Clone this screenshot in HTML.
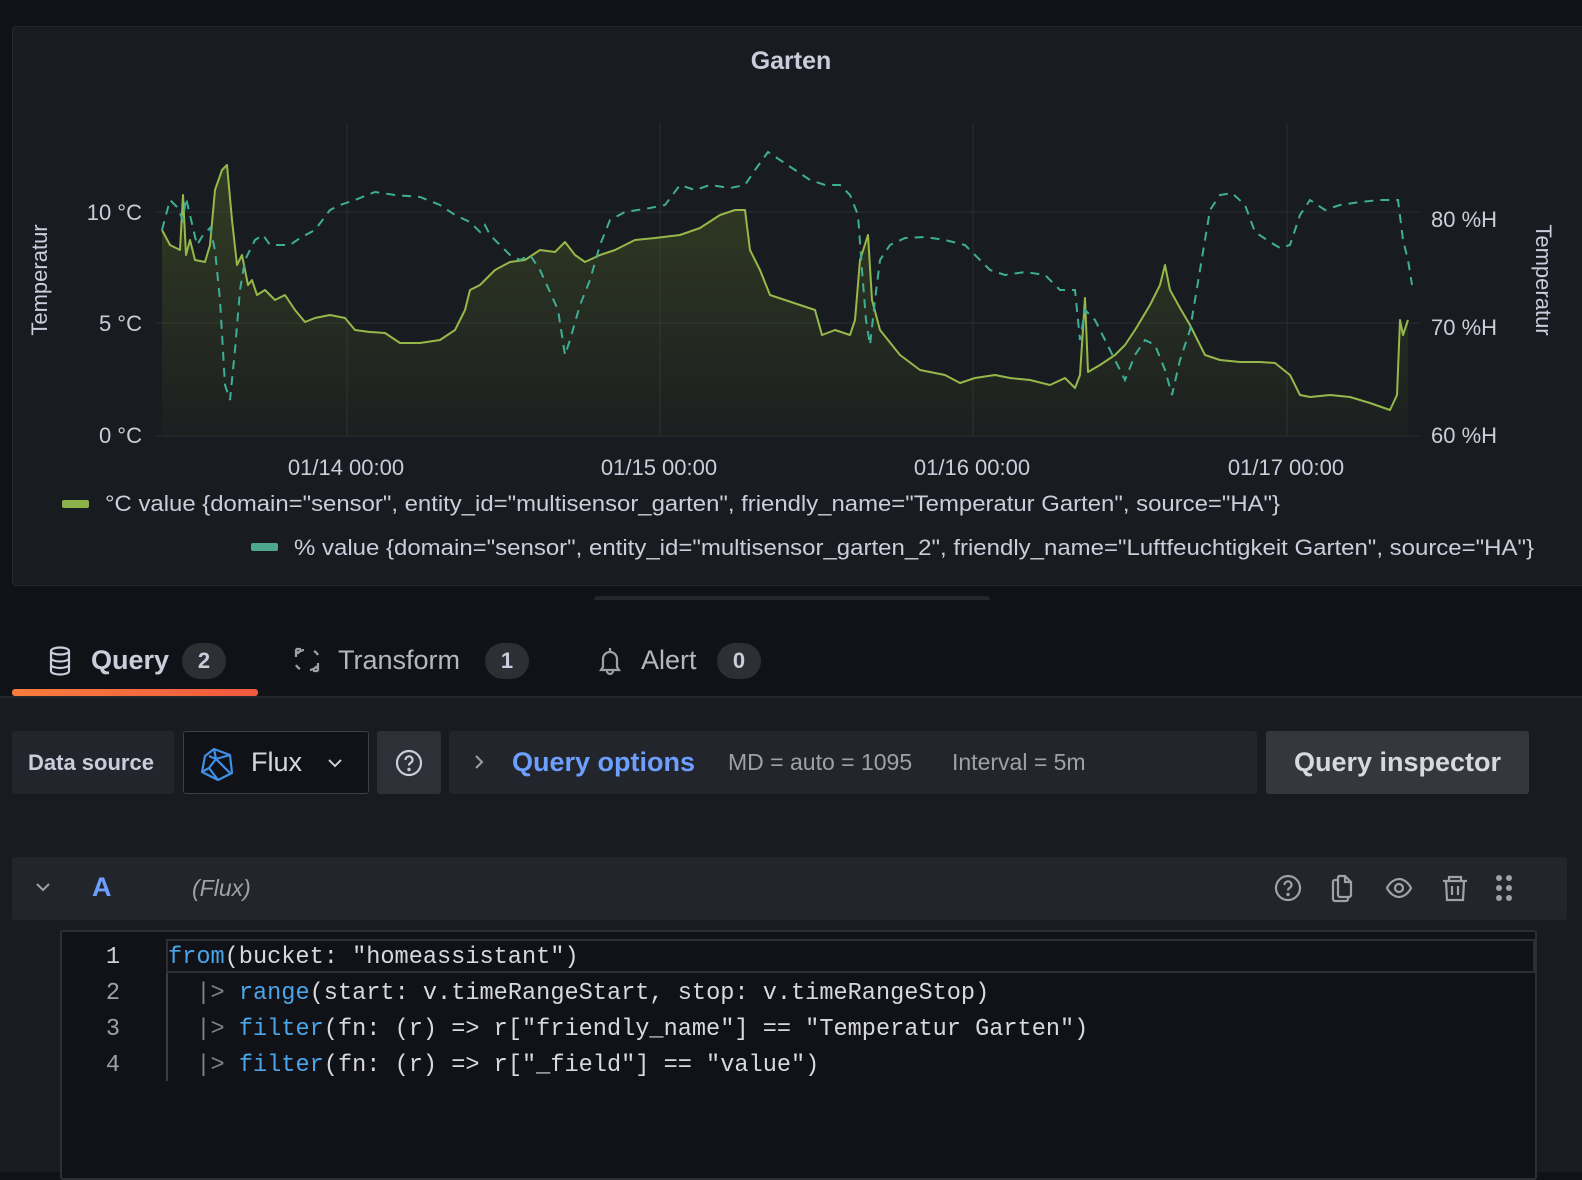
<!DOCTYPE html>
<html><head><meta charset="utf-8"><style>
*{margin:0;padding:0;box-sizing:border-box}
body{width:1582px;height:1172px;background:#111217;font-family:"Liberation Sans",sans-serif;color:#ccccdc;position:relative;overflow:hidden}
.abs{position:absolute}
.panel{left:12px;top:26px;width:1580px;height:560px;background:#181b1f;border:1px solid #24272d;border-radius:4px}
.lower{left:0;top:698px;width:1582px;height:474px;background:#181b1f}
.badge{position:absolute;height:36px;border-radius:18px;background:#2d2f35;color:#ccccdc;font-size:22px;font-weight:bold;text-align:center;line-height:36px;width:44px}
.tab{position:absolute;top:642px;font-size:27px;line-height:36px}
.box{position:absolute;top:731px;height:63px;border-radius:3px}
.mono{font-family:"Liberation Mono",monospace;font-size:23.6px;line-height:36px;white-space:pre}
</style></head><body>
<div class="abs panel"></div>
<svg class="abs" style="left:0;top:0" width="1582" height="600">
<text x="791" y="69" text-anchor="middle" font-size="25" font-weight="bold" fill="#ccccdc" font-family="Liberation Sans">Garten</text>
<g stroke="#2a2d33" stroke-width="1">
<line x1="155" y1="212" x2="1420" y2="212"/><line x1="155" y1="323" x2="1420" y2="323"/><line x1="155" y1="436" x2="1420" y2="436"/>
<line x1="347" y1="123" x2="347" y2="436"/><line x1="660" y1="123" x2="660" y2="436"/><line x1="973" y1="123" x2="973" y2="436"/><line x1="1287" y1="123" x2="1287" y2="436"/>
</g>
<g font-size="22" fill="#ccccdc" font-family="Liberation Sans">
<text x="142" y="220" text-anchor="end">10 °C</text><text x="142" y="331" text-anchor="end">5 °C</text><text x="142" y="443" text-anchor="end">0 °C</text>
<text x="1431" y="227">80 %H</text><text x="1431" y="335">70 %H</text><text x="1431" y="443">60 %H</text>
<text x="346" y="475" text-anchor="middle">01/14 00:00</text><text x="659" y="475" text-anchor="middle">01/15 00:00</text><text x="972" y="475" text-anchor="middle">01/16 00:00</text><text x="1286" y="475" text-anchor="middle">01/17 00:00</text>
<text transform="translate(47,280) rotate(-90)" text-anchor="middle">Temperatur</text>
<text transform="translate(1536,280) rotate(90)" text-anchor="middle">Temperatur</text>
<text x="105" y="511" textLength="1175" lengthAdjust="spacingAndGlyphs">°C value {domain="sensor", entity_id="multisensor_garten", friendly_name="Temperatur Garten", source="HA"}</text>
<text x="294" y="555" textLength="1240" lengthAdjust="spacingAndGlyphs">% value {domain="sensor", entity_id="multisensor_garten_2", friendly_name="Luftfeuchtigkeit Garten", source="HA"}</text>
</g>
<rect x="62" y="500" width="27" height="8" rx="2" fill="#8ab04a"/>
<rect x="251" y="543" width="27" height="8" rx="2" fill="#4ea88e"/>
<defs><linearGradient id="g" x1="0" y1="0" x2="0" y2="1"><stop offset="0" stop-color="#5a6e2a" stop-opacity=".4"/><stop offset="1" stop-color="#5a6e2a" stop-opacity=".05"/></linearGradient></defs>
<polygon fill="url(#g)" points="162,436 162,230 170,245 180,250 183,195 186,255 190,240 195,260 205,262 210,245 215,190 222,170 227,165 232,220 237,265 242,255 248,285 252,280 257,295 265,290 275,300 285,295 295,310 305,322 315,318 330,315 345,318 355,330 370,332 385,333 400,343 420,343 440,340 455,330 465,310 470,290 480,285 495,270 510,262 525,260 540,250 555,252 565,242 575,255 585,262 600,255 615,250 635,240 655,238 680,235 700,228 720,215 735,210 745,210 750,250 760,270 770,295 785,300 800,305 815,310 822,335 835,330 850,335 855,320 860,260 868,235 872,300 880,330 900,355 920,370 945,375 960,383 975,378 995,375 1010,378 1030,380 1050,385 1065,378 1075,388 1080,375 1085,298 1088,372 1100,365 1115,355 1125,345 1135,330 1150,305 1160,285 1165,265 1170,290 1180,308 1190,325 1205,355 1220,360 1240,362 1260,362 1275,363 1290,375 1300,395 1310,397 1330,395 1350,397 1370,403 1390,410 1397,395 1400,320 1403,335 1408,320 1408,436"/>
<polyline fill="none" stroke="#96b84a" stroke-width="2" stroke-linejoin="round" points="162,230 170,245 180,250 183,195 186,255 190,240 195,260 205,262 210,245 215,190 222,170 227,165 232,220 237,265 242,255 248,285 252,280 257,295 265,290 275,300 285,295 295,310 305,322 315,318 330,315 345,318 355,330 370,332 385,333 400,343 420,343 440,340 455,330 465,310 470,290 480,285 495,270 510,262 525,260 540,250 555,252 565,242 575,255 585,262 600,255 615,250 635,240 655,238 680,235 700,228 720,215 735,210 745,210 750,250 760,270 770,295 785,300 800,305 815,310 822,335 835,330 850,335 855,320 860,260 868,235 872,300 880,330 900,355 920,370 945,375 960,383 975,378 995,375 1010,378 1030,380 1050,385 1065,378 1075,388 1080,375 1085,298 1088,372 1100,365 1115,355 1125,345 1135,330 1150,305 1160,285 1165,265 1170,290 1180,308 1190,325 1205,355 1220,360 1240,362 1260,362 1275,363 1290,375 1300,395 1310,397 1330,395 1350,397 1370,403 1390,410 1397,395 1400,320 1403,335 1408,320"/>
<polyline fill="none" stroke="#3fae96" stroke-width="2" stroke-dasharray="9,7" points="162,230 170,200 177,207 183,220 186,198 190,215 193,228 197,245 203,235 210,228 215,250 220,300 225,385 230,400 235,350 240,290 245,260 255,240 263,235 270,245 290,245 300,238 315,230 330,210 340,205 355,200 375,192 395,195 420,197 440,205 455,215 470,222 480,232 485,225 490,235 500,245 510,255 520,260 530,255 540,270 550,292 558,310 565,355 570,340 580,305 590,280 600,245 610,220 625,212 650,208 665,205 680,185 695,190 710,185 730,188 745,185 755,170 768,152 780,160 795,170 810,180 825,185 840,185 850,195 858,215 862,270 866,320 870,345 875,300 880,260 890,245 905,238 925,237 945,240 965,245 980,260 990,270 1005,275 1025,272 1045,275 1060,290 1075,290 1080,340 1085,310 1095,320 1110,350 1125,380 1135,355 1145,340 1155,345 1165,370 1172,395 1180,360 1190,330 1200,270 1210,210 1220,195 1232,193 1245,205 1255,232 1270,242 1280,248 1290,245 1300,215 1310,200 1325,210 1340,205 1360,202 1380,200 1398,200 1403,240 1408,260 1412,285"/>
<rect x="594" y="596" width="396" height="6" rx="3" fill="#24272d"/>
</svg>

<div class="abs lower"></div>
<div class="abs" style="left:0;top:696px;width:1582px;height:2px;background:#24272d"></div>
<div class="abs" style="left:12px;top:689px;width:246px;height:7px;border-radius:3px;background:linear-gradient(90deg,#f87d3c,#f05a3f)"></div>

<svg class="abs" style="left:47px;top:646px" width="26" height="30" viewBox="0 0 26 30" fill="none" stroke="#ccccdc" stroke-width="2.2"><ellipse cx="13" cy="5" rx="9" ry="3.5"/><path d="M4 5v20c0 2 4 3.5 9 3.5s9-1.5 9-3.5V5M4 12c0 2 4 3.5 9 3.5s9-1.5 9-3.5M4 18.5c0 2 4 3.5 9 3.5s9-1.5 9-3.5"/></svg>
<div class="tab" style="left:91px;color:#ccccdc;font-weight:bold">Query</div>
<div class="badge" style="left:182px;top:643px">2</div>
<svg class="abs" style="left:293px;top:646px" width="28" height="28" viewBox="0 0 28 28" fill="none" stroke="#9fa1a8" stroke-width="2.2"><path d="M3 11V5l2 2a10 10 0 0 1 6-3M25 17v6l-2-2a10 10 0 0 1-6 3M8 3H3M20 25h5M25 9a10 10 0 0 0-4-4M3 19a10 10 0 0 0 4 4"/></svg>
<div class="tab" style="left:338px;color:#b5b7c0">Transform</div>
<div class="badge" style="left:485px;top:643px">1</div>
<svg class="abs" style="left:598px;top:646px" width="24" height="30" viewBox="0 0 24 30" fill="none" stroke="#9fa1a8" stroke-width="2.2"><path d="M12 2v3M5 21V13a7 7 0 0 1 14 0v8l2 3H3zM9 25a3 3 0 0 0 6 0"/></svg>
<div class="tab" style="left:641px;color:#b5b7c0">Alert</div>
<div class="badge" style="left:717px;top:643px">0</div>

<div class="box" style="left:12px;width:162px;background:#22252b;font-size:22px;font-weight:bold;line-height:63px;padding-left:16px;color:#ccccdc">Data source</div>
<div class="box" style="left:183px;width:186px;background:#111217;border:1px solid #3b3f46">
<svg class="abs" style="left:16px;top:15px" width="34" height="34" viewBox="0 0 34 34" fill="none" stroke="#3f8fe8" stroke-width="2.2" stroke-linejoin="round"><path d="M14 2L30 8l2 18-14 7-16-8 3-16zM14 2l2 10 14-4M16 12l-7 9 9 12M16 12l14 14M2 25l7-4M9 9l7 3"/></svg>
<div class="abs" style="left:67px;top:0;font-size:27px;line-height:61px;color:#d8d9e0">Flux</div>
<svg class="abs" style="left:143px;top:25px" width="16" height="12" viewBox="0 0 16 12" fill="none" stroke="#ccccdc" stroke-width="2"><path d="M2 3l6 6 6-6"/></svg>
</div>
<div class="box" style="left:377px;width:64px;background:#2d3036"><svg class="abs" style="left:17px;top:17px" width="30" height="30" viewBox="0 0 30 30" fill="none" stroke="#ccccdc" stroke-width="2.2"><circle cx="15" cy="15" r="12"/><path d="M11.5 12a3.5 3.5 0 1 1 5 3c-1.2.7-1.5 1.3-1.5 2.5"/><circle cx="15" cy="21.5" r=".6" fill="#ccccdc"/></svg></div>
<div class="box" style="left:449px;width:808px;background:#22252b">
<svg class="abs" style="left:24px;top:22px" width="12" height="18" viewBox="0 0 12 18" fill="none" stroke="#9fa1a8" stroke-width="2"><path d="M3 3l6 6-6 6"/></svg>
<div class="abs" style="left:63px;top:0;font-size:27px;font-weight:bold;line-height:63px;color:#6e9fff">Query options</div>
<div class="abs" style="left:279px;top:0;font-size:23px;line-height:63px;color:#9fa1a8">MD = auto = 1095</div>
<div class="abs" style="left:503px;top:0;font-size:23px;line-height:63px;color:#9fa1a8">Interval = 5m</div>
</div>
<div class="box" style="left:1266px;width:263px;background:#34373d;font-size:27px;font-weight:bold;line-height:63px;text-align:center;color:#d8d9e0">Query inspector</div>

<div class="abs" style="left:12px;top:857px;width:1555px;height:63px;background:#22252b;border-radius:3px"></div>
<svg class="abs" style="left:35px;top:881px" width="16" height="12" viewBox="0 0 16 12" fill="none" stroke="#9fa1a8" stroke-width="2"><path d="M2 3l6 6 6-6"/></svg>
<div class="abs" style="left:92px;top:872px;font-size:27px;font-weight:bold;color:#6e9fff">A</div>
<div class="abs" style="left:192px;top:875px;font-size:23px;font-style:italic;color:#9fa1a8">(Flux)</div>
<svg class="abs" style="left:1273px;top:872px" width="250" height="32" viewBox="0 0 250 32" fill="none" stroke="#9fa1a8" stroke-width="2.2">
<circle cx="15" cy="16" r="12"/><path d="M11.5 13a3.5 3.5 0 1 1 5 3c-1.2.7-1.5 1.3-1.5 2.5"/><circle cx="15" cy="22.5" r=".6" fill="#9fa1a8"/>
<path d="M65 8h-3a2 2 0 0 0-2 2v17a2 2 0 0 0 2 2h11a2 2 0 0 0 2-2v-2M65 4h7l6 6v13a2 2 0 0 1-2 2h-9a2 2 0 0 1-2-2V6a2 2 0 0 1 2-2zM72 4v6h6"/>
<path d="M114 16c3-6 8-9 12-9s9 3 12 9c-3 6-8 9-12 9s-9-3-12-9z"/><circle cx="126" cy="16" r="4"/>
<path d="M170 9h24M176 9V5h12v4M173 9l1 19h16l1-19M179 14v9M185 14v9"/>
<g fill="#9fa1a8" stroke="none"><circle cx="226" cy="6" r="3"/><circle cx="236" cy="6" r="3"/><circle cx="226" cy="16" r="3"/><circle cx="236" cy="16" r="3"/><circle cx="226" cy="26" r="3"/><circle cx="236" cy="26" r="3"/></g>
</svg>

<div class="abs" style="left:60px;top:930px;width:1477px;height:250px;background:#111217;border:2px solid #2c2f35;border-radius:3px"></div>
<div class="abs" style="left:166px;top:939px;width:1369px;height:34px;border:2px solid #2c2f35"></div>
<div class="abs" style="left:166px;top:973px;width:2px;height:108px;background:#3a3d44"></div>
<div class="abs mono" style="left:80px;top:940px;width:40px;text-align:right;color:#9fa1a8"><span style="color:#ccccdc">1</span>
2
3
4</div>
<div class="abs mono" style="left:168px;top:940px;color:#d8d9e0"><span style="color:#4aa6e8">from</span>(bucket: "homeassistant")
  <span style="color:#7d8088">|&gt;</span> <span style="color:#4aa6e8">range</span>(start: v.timeRangeStart, stop: v.timeRangeStop)
  <span style="color:#7d8088">|&gt;</span> <span style="color:#4aa6e8">filter</span>(fn: (r) =&gt; r["friendly_name"] == "Temperatur Garten")
  <span style="color:#7d8088">|&gt;</span> <span style="color:#4aa6e8">filter</span>(fn: (r) =&gt; r["_field"] == "value")</div>
</body></html>
